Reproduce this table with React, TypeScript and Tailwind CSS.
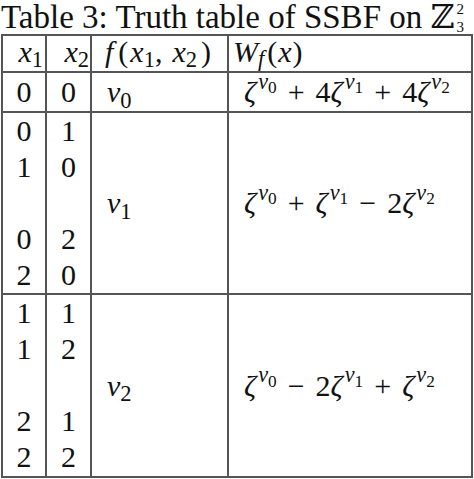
import type { ReactNode } from 'react';

const serif = { fontFamily: '"Liberation Serif", "DejaVu Serif", serif' };

function I({ children, className = '' }: { children: ReactNode; className?: string }) {
  return <i className={`italic ${className}`}>{children}</i>;
}

function Zeta({ k }: { k: number }) {
  return (
    <span>
      <I>ζ</I>
      <sup className="text-[0.74em] top-[-0.6em] ml-[2px]">
        <I>v</I>
        <sub className="text-[0.78em] not-italic">{k}</sub>
      </sup>
    </span>
  );
}

function Op({ children }: { children: ReactNode }) {
  return <span className="mx-[11px]">{children}</span>;
}

function Cell({ children, className = '' }: { children?: ReactNode; className?: string }) {
  return <div className={`flex items-center ${className}`}>{children}</div>;
}

const groups = [
  { rows: [['0', '1'], ['1', '0'], null, ['0', '2'], ['2', '0']], v: 1, ops: ['+', '−2'] },
  { rows: [['1', '1'], ['1', '2'], null, ['2', '1'], ['2', '2']], v: 2, ops: ['−2', '+'] },
];

export default function App() {
  return (
    <div className="w-[474px] h-[479px] bg-white text-[#111] overflow-hidden" style={serif}>
      {/* Caption */}
      <div className="h-[34px] pl-[1px] text-[33px] leading-[34px] whitespace-nowrap">
        Table 3: Truth table of SSBF on{' '}
        <span>ℤ</span>
        <span className="inline-flex flex-col align-top text-[15px] leading-[18px] ml-[2px]">
          <span>2</span>
          <span>3</span>
        </span>
      </div>

      {/* Table */}
      <div className="ml-[1px] w-[472px] h-[444px] border-2 border-[#555] flex flex-col text-[30px] leading-none">
        {/* Header */}
        <div className="grid grid-cols-[44px_45px_137px_242px] h-[37px] border-b-2 border-[#555]">
          <Cell className="justify-end pr-[2px] pb-[4px] border-r-2 border-[#555]">
            <span>
              <I>x</I>
              <sub>1</sub>
            </span>
          </Cell>
          <Cell className="justify-end pr-[1px] pb-[4px] border-r-2 border-[#555]">
            <span>
              <I>x</I>
              <sub>2</sub>
            </span>
          </Cell>
          <Cell className="pl-[13px] pb-[4px] border-r-2 border-[#555]">
            <span>
              <I className="mr-[5px]">f</I>(<I className="ml-[2px]">x</I>
              <sub>1</sub>
              <span className="mr-[10px]">,</span>
              <I>x</I>
              <sub className="mr-[4px]">2</sub>)
            </span>
          </Cell>
          <Cell className="pl-[4px] pb-[4px]">
            <span>
              <I>W</I>
              <sub className="mr-[3px] bottom-[-0.18em]">
                <I>f</I>
              </sub>
              (<I className="mx-[1px]">x</I>)
            </span>
          </Cell>
        </div>

        {/* v0 row */}
        <div className="grid grid-cols-[44px_45px_137px_242px] h-[40px] border-b-2 border-[#555]">
          <Cell className="justify-center border-r-2 border-[#555]">0</Cell>
          <Cell className="justify-center border-r-2 border-[#555]">0</Cell>
          <Cell className="pl-[15px] border-r-2 border-[#555]">
            <span>
              <I>v</I>
              <sub>0</sub>
            </span>
          </Cell>
          <Cell className="pl-[15px]">
            <Zeta k={0} />
            <Op>+</Op>4<Zeta k={1} />
            <Op>+</Op>4<Zeta k={2} />
          </Cell>
        </div>

        {/* Grouped rows */}
        {groups.map((g, gi) => (
          <div
            key={gi}
            className={`grid grid-cols-[44px_45px_137px_242px] ${
              gi === 0 ? 'h-[182px] border-b-2 border-[#555]' : 'flex-1'
            }`}
          >
            <div className="flex flex-col border-r-2 border-[#555]">
              {g.rows.map((r, ri) => (
                <div key={ri} className="h-[36px] flex items-center justify-center">
                  {r ? r[0] : ''}
                </div>
              ))}
            </div>
            <div className="flex flex-col border-r-2 border-[#555]">
              {g.rows.map((r, ri) => (
                <div key={ri} className="h-[36px] flex items-center justify-center">
                  {r ? r[1] : ''}
                </div>
              ))}
            </div>
            <Cell className="pl-[15px] border-r-2 border-[#555]">
              <span>
                <I>v</I>
                <sub>{g.v}</sub>
              </span>
            </Cell>
            <Cell className="pl-[15px]">
              <Zeta k={0} />
              {g.ops[0] === '+' ? <Op>+</Op> : <><Op>−</Op>2</>}
              <Zeta k={1} />
              {g.ops[1] === '+' ? <Op>+</Op> : <><Op>−</Op>2</>}
              <Zeta k={2} />
            </Cell>
          </div>
        ))}
      </div>
    </div>
  );
}
